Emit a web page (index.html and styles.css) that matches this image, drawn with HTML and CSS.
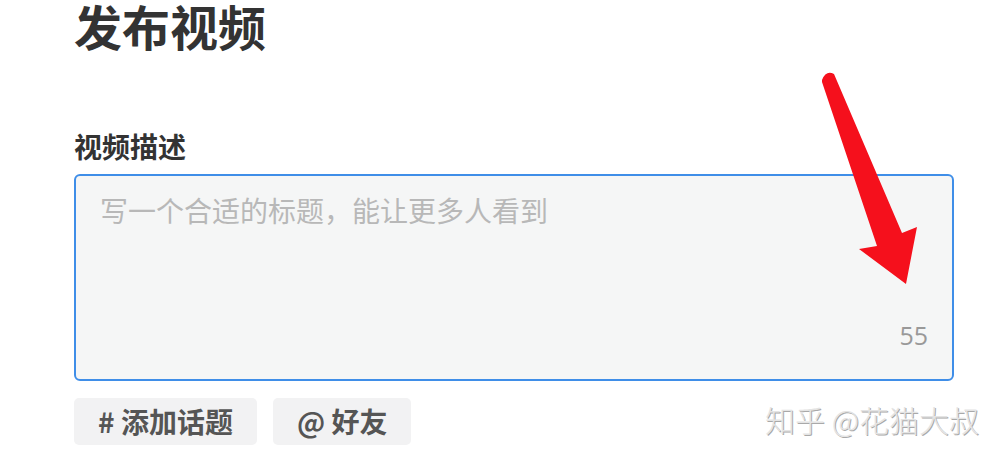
FILE: index.html
```html
<!DOCTYPE html>
<html lang="zh-CN">
<head>
<meta charset="utf-8">
<link rel="stylesheet" href="styles.css">
</head>
<body>
<div class="page">
  <h1 class="title">发布视频</h1>
  <div class="label">视频描述</div>
  <div class="editor">
    <div class="placeholder">写一个合适的标题，能让更多人看到</div>
    <div class="counter">55</div>
  </div>
  <div class="actions">
    <div class="chip"># 添加话题</div>
    <div class="chip">@ 好友</div>
  </div>
  <div class="watermark">知乎 @花猫大叔</div>
  <svg class="arrow" width="1008" height="460" viewBox="0 0 1008 460">
    <path d="M822 80 Q826 70 834 74 L902 233 L917 227 L906 284 L859 249 L877 246 L822 82 Z" fill="#f5101c"/>
  </svg>
</div>
</body>
</html>
```
FILE: styles.css
```css
html, body {
  margin: 0;
  padding: 0;
  background: #ffffff;
}
.page {
  position: relative;
  width: 1008px;
  height: 460px;
  overflow: hidden;
  padding-left: 74px;
  padding-top: 1px;
  box-sizing: border-box;
  font-family: "Noto Sans CJK SC", "Noto Sans", sans-serif;
}
.title {
  margin: 0;
  font-size: 48px;
  line-height: 48px;
  font-weight: 700;
  color: #333333;
}
.label {
  margin-top: 83px;
  font-size: 28px;
  line-height: 28px;
  font-weight: 700;
  color: #333333;
}
.editor {
  margin-top: 14px;
  width: 880px;
  height: 207px;
  box-sizing: border-box;
  border: 2px solid #3f8ee8;
  border-radius: 6px;
  background: #f5f6f6;
  padding: 19px 24px 31px 24px;
  display: flex;
  flex-direction: column;
  justify-content: space-between;
}
.placeholder {
  font-size: 28px;
  line-height: 30px;
  color: #b8b8b8;
}
.counter {
  align-self: flex-end;
  font-size: 25px;
  line-height: 26px;
  color: #999999;
  font-family: "Open Sans", "Noto Sans", sans-serif;
}
.actions {
  margin-top: 17px;
  display: flex;
  gap: 16px;
}
.chip {
  height: 47px;
  line-height: 47px;
  padding: 0 24px;
  background: #f2f2f3;
  border-radius: 5px;
  font-size: 28px;
  font-weight: 700;
  color: #555555;
}
.watermark {
  position: absolute;
  left: 765px;
  top: 399px;
  font-size: 30px;
  line-height: 40px;
  font-weight: 300;
  color: #e4e4e4;
  text-shadow: 1px 1px 0 #a9a9a9;
  white-space: nowrap;
}
.arrow {
  position: absolute;
  left: 0;
  top: 0;
}
```
